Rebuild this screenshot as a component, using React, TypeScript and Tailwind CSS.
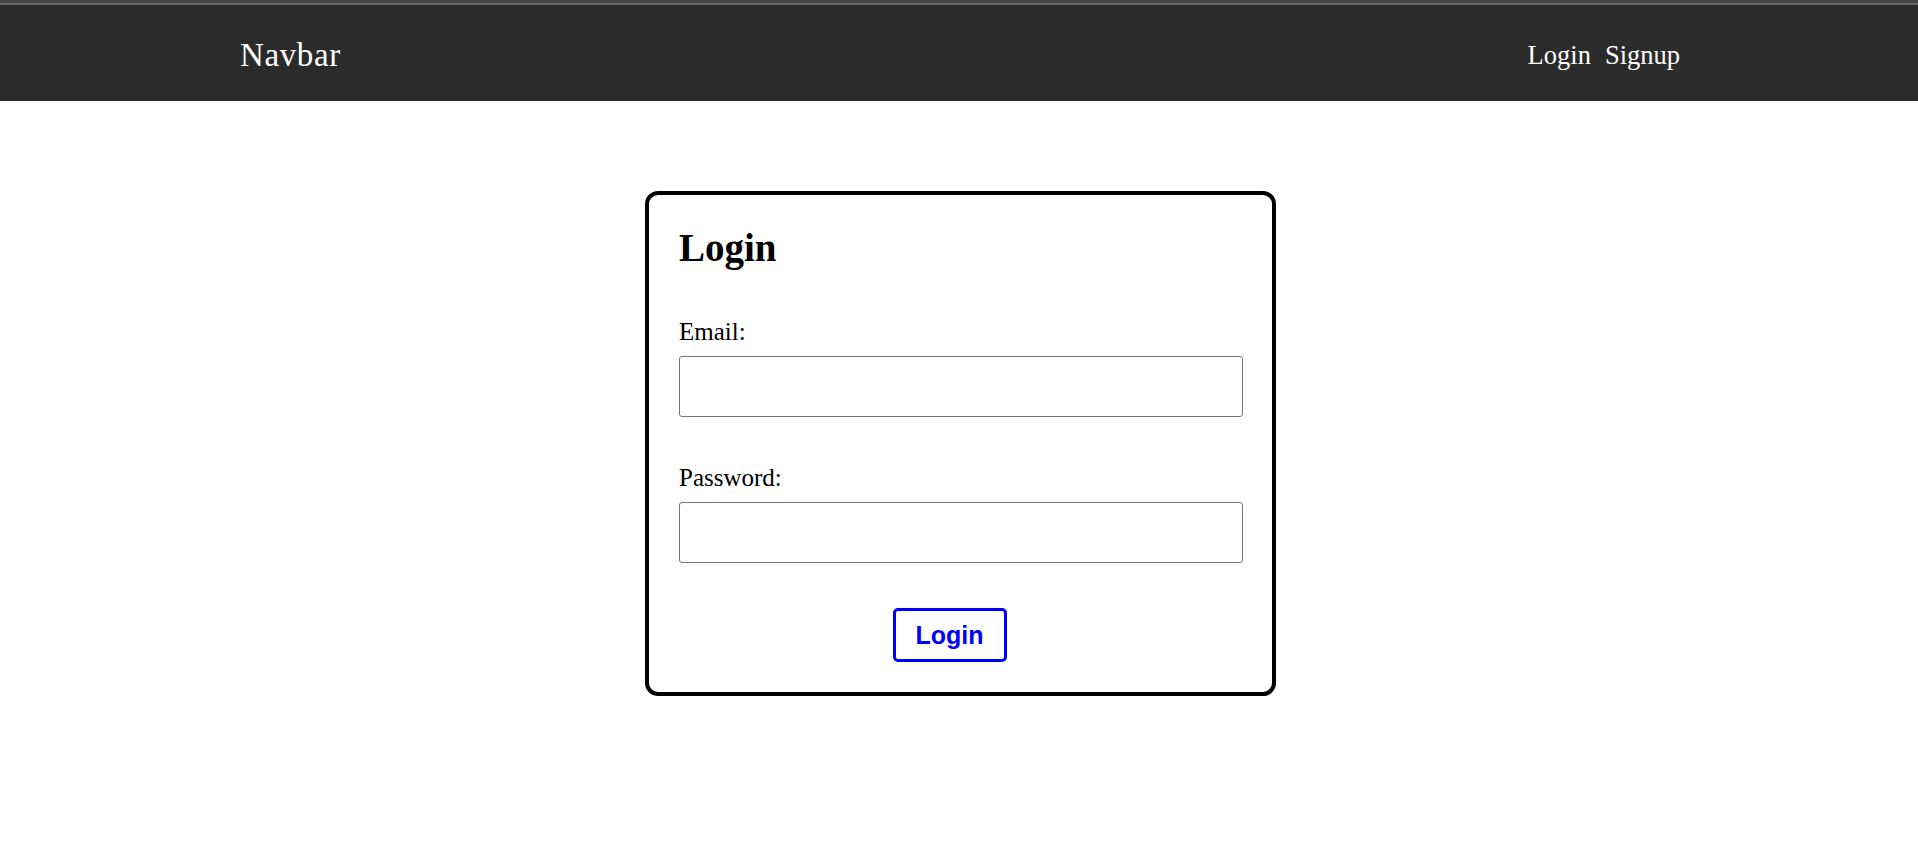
import React, { useState } from 'react';

const serif = "font-['Liberation_Serif','Times_New_Roman',serif]";

const Navbar: React.FC = () => (
  <nav className="bg-[#2b2b2b]">
    <div className="h-[3px] bg-[#454545]" />
    <div className="h-[2px] bg-[#6b6b6b]" />
    <div className={`h-[96px] pt-[4px] flex items-center justify-between pl-[240px] pr-[238px] text-white ${serif}`}>
      <span className="text-[33px] leading-none tracking-[0.6px]">Navbar</span>
      <div className="flex gap-[14px] text-[26.5px] leading-none">
        <a href="#" className="text-white">Login</a>
        <a href="#" className="text-white">Signup</a>
      </div>
    </div>
  </nav>
);

export default function App() {
  const [email, setEmail] = useState('');
  const [password, setPassword] = useState('');

  return (
    <div className="min-h-screen bg-white">
      <Navbar />

      <div className="flex justify-center pl-[3px] pt-[90px]">
        <form
          onSubmit={(e) => e.preventDefault()}
          className={`w-[631px] border-4 border-black rounded-[13px] pl-[30px] pr-[29px] pt-[33px] pb-[30px] text-black ${serif}`}
        >
          <h2 className="text-[39px] font-bold leading-none">Login</h2>

          <label className="block mt-[52px] text-[25px] leading-none">Email:</label>
          <input
            type="email"
            value={email}
            onChange={(e) => setEmail(e.target.value)}
            className="block w-full h-[61px] mt-[12px] px-[11px] border border-[#767676] rounded-[3px] text-[20px] focus:outline-none"
          />

          <label className="block mt-[48px] text-[25px] leading-none">Password:</label>
          <input
            type="password"
            value={password}
            onChange={(e) => setPassword(e.target.value)}
            className="block w-full h-[61px] mt-[12px] px-[11px] border border-[#767676] rounded-[3px] text-[20px] focus:outline-none"
          />

          <div className="flex justify-center pr-[23px] mt-[45px]">
            <button
              type="submit"
              className="w-[114px] h-[54px] border-[3px] border-[#0000ff] rounded-[5px] bg-white text-[#0000ff] text-[25px] font-bold leading-none font-['Liberation_Sans',Arial,sans-serif]"
            >
              Login
            </button>
          </div>
        </form>
      </div>
    </div>
  );
}
